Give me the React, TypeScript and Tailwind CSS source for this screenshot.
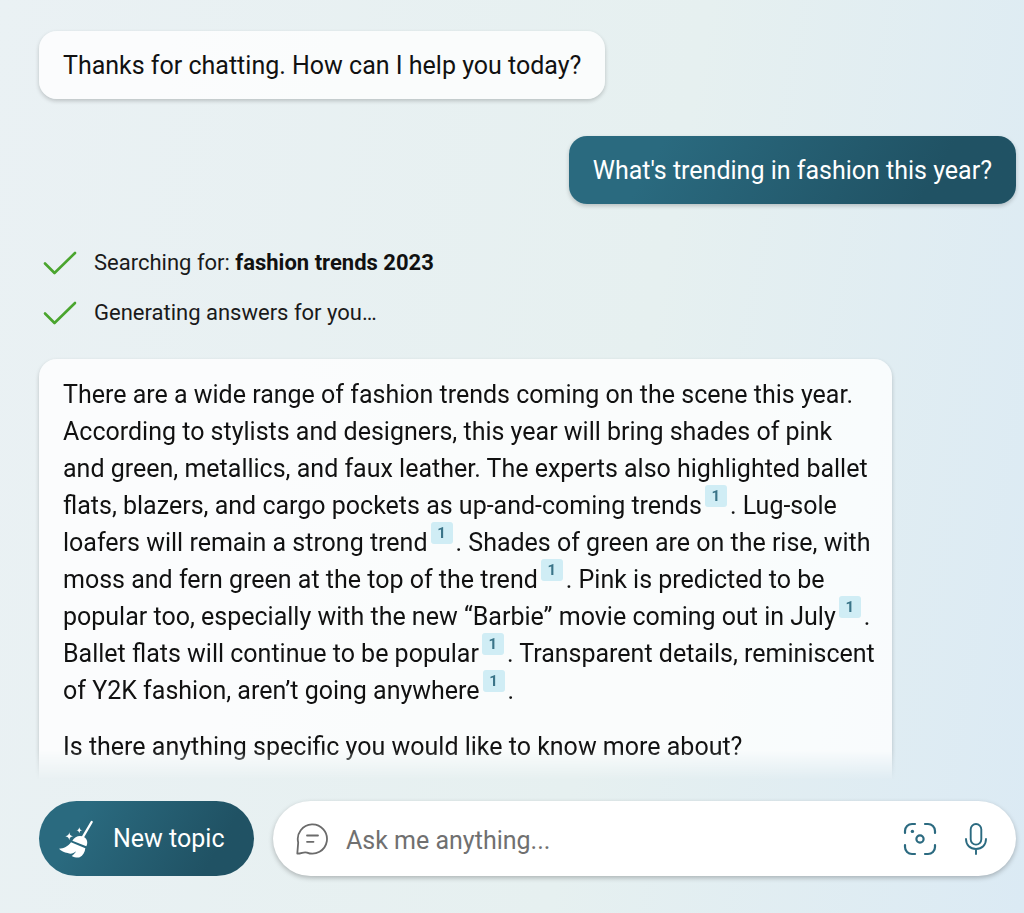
import type { ReactNode } from "react";

interface BubbleProps {
  from: "bot" | "user";
  children: ReactNode;
}

function Bubble({ from, children }: BubbleProps) {
  const tone =
    from === "user"
      ? "self-end bg-linear-120 from-[#2a6a7f] from-20% to-[#205264] to-80% text-white"
      : "self-start bg-white/80 text-[#111111]";

  return (
    <div className={`rounded-[18px] px-6 pt-[17px] pb-[15px] shadow-[0_2px_4px_rgba(0,0,0,0.2)] ${tone}`}>
      <p className="text-[25px] leading-9">{children}</p>
    </div>
  );
}

function Step({ children }: { children: ReactNode }) {
  return (
    <li className="flex h-[50px] items-center gap-[17px] pl-1 text-[22px] leading-8 text-[#1a1a1a]">
      <svg width="34" height="26" viewBox="0 0 34 26" fill="none" aria-hidden="true">
        <path d="M2 13.5 11.5 23 32 3" stroke="#4aa52e" strokeWidth="2.6" strokeLinecap="round" strokeLinejoin="round" />
      </svg>
      <span>{children}</span>
    </li>
  );
}

function Cite() {
  return (
    <a
      href="#source-1"
      className="mx-[3px] -my-1 inline-block h-[22px] w-[22px] rounded-[3px] bg-[#d0edf5] text-center align-[13px] text-[15px] leading-[22px] font-bold text-[#3a7488]"
    >
      1
    </a>
  );
}

function BroomIcon() {
  return (
    <svg width="36" height="38" viewBox="0 0 108 114" fill="#ffffff" aria-hidden="true">
      <path d="M98 6 71 52" stroke="#ffffff" strokeWidth="7" strokeLinecap="round" />
      <path d="M40 62c8-14 24-18 36-10 9 6 11 17 6 27z" />
      <path d="M36 67 79 85c-1 11-7 22-17 27-7 2-16 0-24-4 6-4 10-8 13-14-8 7-16 9-25 5C16 97 6 92 0 86c14 0 27-7 36-19z" />
      <path d="M31 37c1 8 3 10 11 12-8 2-10 4-11 12-2-8-4-10-12-12 8-2 10-4 12-12z" />
      <path d="M61 22c1 6 3 8 9 9-6 1-8 3-9 9-2-6-3-8-9-9 6-1 7-3 9-9z" />
    </svg>
  );
}

function ChatIcon() {
  return (
    <svg
      width="34"
      height="34"
      viewBox="0 0 34 34"
      fill="none"
      stroke="#6b6b6b"
      strokeWidth="1.8"
      strokeLinecap="round"
      strokeLinejoin="round"
      aria-hidden="true"
    >
      <path d="M2.3 31.6 3.2 20.5A14.6 14.6 0 1 1 12 30.6C8.6 29.4 7 31.600 2.3 31.6z" />
      <path d="M12 13.5h11M12 19.8h6.5" />
    </svg>
  );
}

function LensIcon() {
  return (
    <svg width="34" height="34" viewBox="0 0 34 34" fill="none" stroke="#2b6a80" strokeWidth="2.2" strokeLinecap="round" aria-hidden="true">
      <path d="M2 11V9a7 7 0 0 1 7-7h3M22 2h3a7 7 0 0 1 7 7v2M32 23v2a7 7 0 0 1-7 7h-3M12 32H9a7 7 0 0 1-7-7v-2" />
      <circle cx="17" cy="17" r="3.6" />
      <circle cx="9.4" cy="9.4" r="1.7" fill="#2b6a80" stroke="none" />
    </svg>
  );
}

function MicIcon() {
  return (
    <svg width="24" height="34" viewBox="0 0 24 34" fill="none" stroke="#2b6a80" strokeWidth="1.9" strokeLinecap="round" aria-hidden="true">
      <rect x="6.7" y="2" width="10.6" height="20.6" rx="5.3" />
      <path d="M2 17c0 6 4 10 10 10s10-4 10-10M12 27v5" />
    </svg>
  );
}

export default function App() {
  return (
    <div className="flex min-h-screen flex-col bg-linear-100 from-[#eaf1f4] via-[#e6f0f0] via-60% to-[#dbeaf4] pt-[31px] pr-2 pb-9 pl-[39px] font-[Roboto,sans-serif]">
      <main className="flex flex-col">
        <Bubble from="bot">Thanks for chatting. How can I help you today?</Bubble>
        <div className="mt-[37px] flex flex-col">
          <Bubble from="user">What's trending in fashion this year?</Bubble>
        </div>

        <ul className="mt-[34px]">
          <Step>
            Searching for: <strong className="font-bold text-[#111111]">fashion trends 2023</strong>
          </Step>
          <Step>Generating answers for you…</Step>
        </ul>

        {/* Answer, faded out where it runs under the composer */}
        <div className="-mx-2 -mt-2 overflow-hidden mask-[linear-gradient(to_bottom,black_calc(100%-30px),transparent)] px-2 pt-[29px]">
          <article className="max-w-[853px] space-y-[19px] rounded-t-[18px] bg-white/80 pt-[17px] pr-4 pb-[15px] pl-6 text-[25px] leading-[37px] text-[#111111] shadow-[0_2px_4px_rgba(0,0,0,0.2)]">
            <p>
              There are a wide range of fashion trends coming on the scene this year. According to
              stylists and designers, this year will bring shades of pink and green, metallics, and
              faux leather. The experts also highlighted ballet flats, blazers, and cargo pockets as
              up-and-coming trends
              <Cite />. Lug-sole loafers will remain a strong trend
              <Cite />. Shades of green are on the rise, with moss and fern green at the top of the
              trend
              <Cite />. Pink is predicted to be popular too, especially with the new “Barbie” movie
              coming out in July
              <Cite />. Ballet flats will continue to be popular
              <Cite />. Transparent details, reminiscent of Y2K fashion, aren’t going anywhere
              <Cite />.
            </p>
            <p>Is there anything specific you would like to know more about?</p>
          </article>
        </div>
      </main>

      <form className="mt-[21px] flex gap-[19px]" onSubmit={(e) => e.preventDefault()}>
        <button
          type="button"
          className="flex h-[75px] w-[215px] shrink-0 items-center gap-[18px] rounded-full bg-linear-120 from-[#2a6a7f] from-20% to-[#205264] to-80% pl-5 text-[25px] text-white"
        >
          <BroomIcon />
          New topic
        </button>
        <div className="flex h-[75px] min-w-0 flex-1 items-center rounded-full bg-white pr-7 pl-[22px] shadow-[0_2px_5px_rgba(0,0,0,0.25)]">
          <ChatIcon />
          <input
            type="text"
            aria-label="Ask me anything"
            placeholder="Ask me anything..."
            className="ml-[17px] min-w-0 flex-1 bg-transparent pt-1 text-[25px] text-[#111111] outline-none placeholder:text-[#707070]"
          />
          <button type="button" aria-label="Search with an image">
            <LensIcon />
          </button>
          <button type="button" aria-label="Use microphone" className="ml-[27px]">
            <MicIcon />
          </button>
        </div>
      </form>
    </div>
  );
}
